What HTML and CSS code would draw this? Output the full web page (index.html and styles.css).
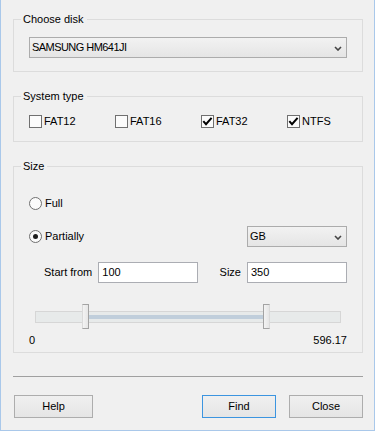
FILE: index.html
```html
<!DOCTYPE html>
<html>
<head>
<meta charset="utf-8">
<title>Find partitions</title>
<link rel="stylesheet" href="styles.css">
</head>
<body>
<div class="window">
  <fieldset class="group g-disk">
    <legend>Choose disk</legend>
    <div class="select">
      <span class="sel-text disk-name">SAMSUNG HM641JI</span>
      <svg class="chev" width="8" height="5" viewBox="0 0 8 5"><path d="M1 1 L4 4 L7 1" fill="none" stroke="#444" stroke-width="1.6"/></svg>
    </div>
  </fieldset>

  <fieldset class="group g-type">
    <legend>System type</legend>
    <div class="checks">
      <label class="check"><span class="box"></span>FAT12</label>
      <label class="check"><span class="box"></span>FAT16</label>
      <label class="check"><span class="box"><svg width="11" height="11" viewBox="0 0 11 11"><path d="M1.3 5.2 L4 8.2 L9.6 1.8" fill="none" stroke="#000" stroke-width="2"/></svg></span>FAT32</label>
      <label class="check"><span class="box"><svg width="11" height="11" viewBox="0 0 11 11"><path d="M1.3 5.2 L4 8.2 L9.6 1.8" fill="none" stroke="#000" stroke-width="2"/></svg></span>NTFS</label>
    </div>
  </fieldset>

  <fieldset class="group g-size">
    <legend>Size</legend>
    <label class="radio"><span class="circle"></span>Full</label>
    <div class="row-part">
      <label class="radio"><span class="circle on"></span>Partially</label>
      <div class="select unit">
        <span class="sel-text">GB</span>
        <svg class="chev" width="8" height="5" viewBox="0 0 8 5"><path d="M1 1 L4 4 L7 1" fill="none" stroke="#444" stroke-width="1.6"/></svg>
      </div>
    </div>
    <div class="row-fields">
      <div class="field"><span class="field-label">Start from</span><div class="input">100</div></div>
      <div class="field"><span class="field-label">Size</span><div class="input">350</div></div>
    </div>
    <div class="slider">
      <div class="track"></div>
      <div class="range" style="left:54px;width:174px"></div>
      <div class="thumb lo" style="left:47px"></div>
      <div class="thumb hi" style="left:228px"></div>
    </div>
    <div class="scale"><span>0</span><span>596.17</span></div>
  </fieldset>

  <div class="sep"></div>

  <div class="buttons">
    <button class="btn help">Help</button>
    <button class="btn default">Find</button>
    <button class="btn">Close</button>
  </div>
</div>
</body>
</html>
```

FILE: styles.css
```css
html, body {
  margin: 0;
  padding: 0;
  background: #ffffff;
}

.window {
  box-sizing: border-box;
  width: 375px;
  height: 431px;
  background: #f0f0f0;
  border: 1px solid #a9c8ea;
  border-top: none;
  padding: 13px 11px 0 12px;
  font-family: "Liberation Sans", Arial, sans-serif;
  font-size: 11px;
  line-height: 13px;
  color: #000;
}

.group {
  margin: 0;
  min-width: 0;
  border: 1px solid #dcdcdc;
  padding: 0 15px;
}

.group legend {
  margin-left: -8px;
  padding: 0 3px 0 2px;
  line-height: 13px;
}

.g-disk {
  padding-top: 11px;
  padding-bottom: 13px;
}

.g-type {
  margin-top: 18px;
  padding-top: 12px;
  padding-bottom: 13px;
}

.g-size {
  margin-top: 18px;
  padding-top: 24px;
  padding-bottom: 5px;
}

/* combo boxes */
.select {
  box-sizing: border-box;
  height: 21px;
  display: flex;
  align-items: center;
  justify-content: space-between;
  border: 1px solid #acacac;
  background: linear-gradient(#f2f2f2, #e5e5e5);
  padding: 0 4px 0 2px;
}

.sel-text {
  line-height: 19px;
}

.disk-name {
  letter-spacing: -0.55px;
}

.chev {
  display: block;
  margin-top: 2px;
}

.unit {
  width: 100px;
}

/* checkboxes */
.checks {
  display: grid;
  grid-template-columns: 86px 86px 86px auto;
}

.check {
  display: flex;
  align-items: center;
  gap: 2px;
  height: 13px;
}

.box {
  box-sizing: border-box;
  width: 13px;
  height: 13px;
  border: 1px solid #707070;
  background: #fbfbfb;
  display: flex;
  align-items: center;
  justify-content: center;
}

.box svg {
  display: block;
}

/* radios */
.radio {
  display: flex;
  align-items: center;
  gap: 3px;
  height: 13px;
}

.circle {
  box-sizing: border-box;
  width: 13px;
  height: 13px;
  border: 1px solid #707070;
  border-radius: 50%;
  background: #fbfbfb;
  display: flex;
  align-items: center;
  justify-content: center;
}

.circle.on::after {
  content: "";
  width: 5px;
  height: 5px;
  border-radius: 50%;
  background: #1e1e1e;
}

.row-part {
  margin-top: 16px;
  height: 21px;
  display: flex;
  align-items: center;
  justify-content: space-between;
}

/* fields */
.row-fields {
  margin-top: 15px;
  padding-left: 15px;
  display: flex;
  justify-content: space-between;
}

.field {
  display: flex;
  align-items: center;
  gap: 6px;
}

.input {
  box-sizing: border-box;
  width: 100px;
  height: 21px;
  border: 1px solid #abadb3;
  background: #fff;
  padding-left: 3px;
  line-height: 19px;
}

/* slider */
.slider {
  position: relative;
  margin: 21px 6px 0;
  height: 25px;
  box-sizing: border-box;
  padding-top: 7px;
}

.track {
  box-sizing: border-box;
  height: 12px;
  border: 1px solid #d6d6d6;
  background: #e7eaea;
}

.range {
  position: absolute;
  top: 11px;
  height: 4px;
  background: #c0cedb;
}

.thumb {
  position: absolute;
  top: 0;
  box-sizing: border-box;
  width: 7px;
  height: 25px;
  border: 1px solid #a3a3a3;
  background: linear-gradient(90deg, #f3f3f3, #e6e6e6);
}

.thumb.lo {
  border-left-color: #dadada;
}

.thumb.hi {
  border-right-color: #dadada;
}

.scale {
  margin-top: 5px;
  display: flex;
  justify-content: space-between;
}

/* separator & buttons */
.sep {
  margin-top: 23px;
  height: 1px;
  background: #a0a0a0;
}

.buttons {
  margin-top: 18px;
  display: flex;
  gap: 13px;
}

.btn {
  box-sizing: border-box;
  width: 74px;
  height: 23px;
  margin: 0;
  padding: 0;
  font: inherit;
  color: #000;
  border: 1px solid #adadad;
  background: linear-gradient(#f0f0f0, #e5e5e5);
}

.btn.help {
  width: 79px;
  margin-left: 1px;
  margin-right: auto;
}

.btn.default {
  border-color: #3c95e0;
}
```
